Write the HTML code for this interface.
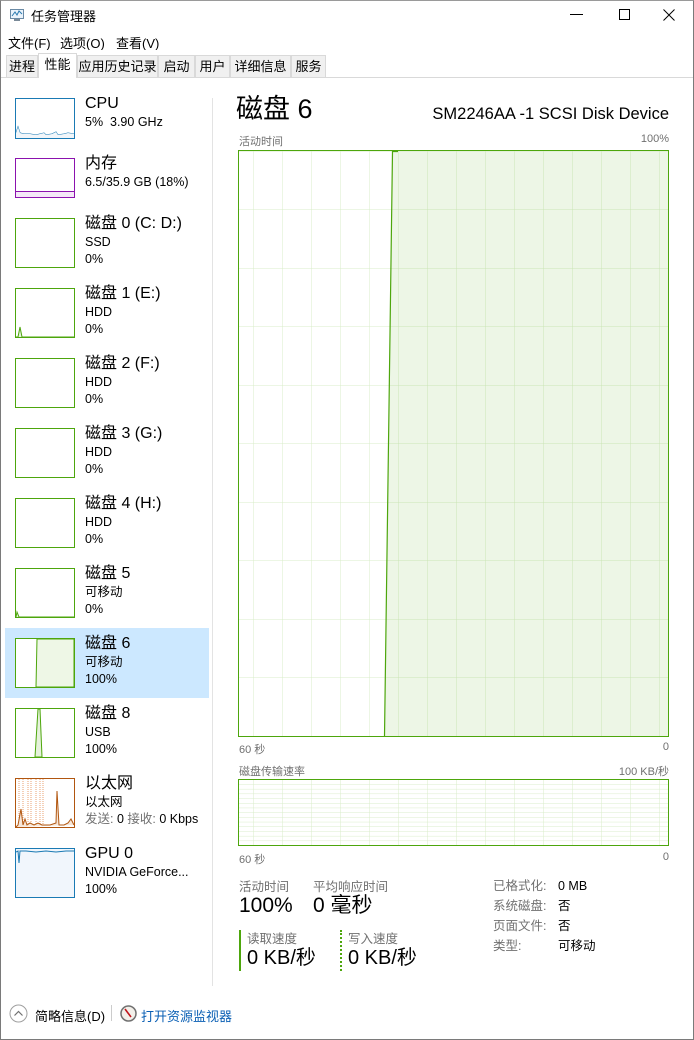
<!DOCTYPE html>
<html><head><meta charset="utf-8"><style>
*{margin:0;padding:0;box-sizing:border-box}
body{width:694px;height:1040px;overflow:hidden;background:#fff;font-family:"Liberation Sans","Noto Sans CJK SC",sans-serif;color:#000;position:relative}
.a{position:absolute;white-space:nowrap}
.win{position:absolute;left:0;top:0;width:694px;height:1040px;border:1px solid #7a7a7a;border-top:1px solid #9a9a9a}
.tab{position:absolute;top:55px;height:22px;background:#f0f0f0;border:1px solid #d9d9d9;border-bottom:none;font-size:13px;line-height:21px;text-align:center}
.th{position:absolute;left:15px;width:60px;border:1px solid #4da60c;background:#fff;overflow:hidden}
.tx{position:absolute;left:85px}
.tx .t{font-size:16px;line-height:20px}
.tx .s{font-size:12.5px;line-height:17px}
.g{color:#707070}
</style></head><body>
<div class="win"></div>
<!-- title bar -->
<svg class="a" style="left:9px;top:8px" width="16" height="15" viewBox="0 0 16 15"><rect x="1.5" y="1.5" width="13" height="9" fill="#eaf3fb" stroke="#6a8aa5"/><polyline points="3,8 6,4 8,7 10,3 13,6" fill="none" stroke="#2a7ab0" stroke-width="1"/><rect x="5" y="11" width="6" height="2" fill="#7a8a98"/></svg>
<div class="a" style="left:31px;top:6px;font-size:13px">任务管理器</div>
<div class="a" style="left:570px;top:14px;width:13px;height:1px;background:#000"></div>
<div class="a" style="left:619px;top:9px;width:11px;height:11px;border:1px solid #000"></div>
<svg class="a" style="left:663px;top:9px" width="12" height="12"><path d="M0.5 0.5L11.5 11.5M11.5 0.5L0.5 11.5" stroke="#000" stroke-width="1"/></svg>
<!-- menu -->
<div class="a" style="left:8px;top:33px;font-size:13px">文件(F)</div>
<div class="a" style="left:60px;top:33px;font-size:13px">选项(O)</div>
<div class="a" style="left:116px;top:33px;font-size:13px">查看(V)</div>
<div class="a" style="left:1px;top:50px;width:692px;height:27px;background:#fff"></div>
<div class="a" style="left:1px;top:77px;width:692px;height:1px;background:#d9d9d9"></div>
<div class="tab" style="left:6px;width:32px">进程</div>
<div class="tab" style="left:38px;width:39px;top:53px;height:25px;background:#fff;line-height:22px">性能</div>
<div class="tab" style="left:77px;width:81px">应用历史记录</div>
<div class="tab" style="left:158px;width:37px">启动</div>
<div class="tab" style="left:195px;width:35px">用户</div>
<div class="tab" style="left:230px;width:61px">详细信息</div>
<div class="tab" style="left:291px;width:35px">服务</div>
<!-- divider -->
<div class="a" style="left:212px;top:98px;width:1px;height:888px;background:#e3e3e3"></div>
<!-- selected -->
<div class="a" style="left:5px;top:628px;width:204px;height:70px;background:#cce8ff"></div>

<!-- CPU -->
<div class="th" style="top:98px;height:41px;border-color:#1a7ab4"><svg width="58" height="39"><polyline points="0,34 2,28 4,34 8,35 14,35 20,36 24,35 28,34 30,36 36,35 40,33 42,36 48,35 52,34 58,35" fill="none" stroke="#1a7ab4" stroke-width="1"/><polygon points="0,34 2,28 4,34 8,35 14,35 20,36 24,35 28,34 30,36 36,35 40,33 42,36 48,35 52,34 58,35 58,39 0,39" fill="#f1f6fa"/></svg></div>
<div class="tx" style="top:94px"><div class="t">CPU</div><div class="s">5%&nbsp; 3.90 GHz</div></div>
<!-- Memory -->
<div class="th" style="top:158px;height:40px;border-color:#8b12ae"><div style="position:absolute;left:0;right:0;bottom:0;height:6px;background:#f4e8f7;border-top:1px solid #8b12ae"></div></div>
<div class="tx" style="top:154px"><div class="t">内存</div><div class="s">6.5/35.9 GB (18%)</div></div>

<div class="th" style="top:218px;height:50px"></div>
<div class="tx" style="top:214px"><div class="t">磁盘 0 (C: D:)</div><div class="s">SSD</div><div class="s">0%</div></div>

<div class="th" style="top:288px;height:50px"><svg width="58" height="48"><polyline points="0,48 2,48 4,38 6,48 58,48" fill="#e6f2dc" stroke="#4da60c"/></svg></div>
<div class="tx" style="top:284px"><div class="t">磁盘 1 (E:)</div><div class="s">HDD</div><div class="s">0%</div></div>

<div class="th" style="top:358px;height:50px"></div>
<div class="tx" style="top:354px"><div class="t">磁盘 2 (F:)</div><div class="s">HDD</div><div class="s">0%</div></div>

<div class="th" style="top:428px;height:50px"></div>
<div class="tx" style="top:424px"><div class="t">磁盘 3 (G:)</div><div class="s">HDD</div><div class="s">0%</div></div>

<div class="th" style="top:498px;height:50px"></div>
<div class="tx" style="top:494px"><div class="t">磁盘 4 (H:)</div><div class="s">HDD</div><div class="s">0%</div></div>

<div class="th" style="top:568px;height:50px"><svg width="58" height="48"><polyline points="0,48 1,43 3,48 8,48 58,48" fill="#e6f2dc" stroke="#4da60c"/></svg></div>
<div class="tx" style="top:564px"><div class="t">磁盘 5</div><div class="s">可移动</div><div class="s">0%</div></div>

<div class="th" style="top:638px;height:50px"><svg width="58" height="48"><polygon points="20,48 21,0 58,0 58,48" fill="#eef7e6" stroke="#4da60c"/></svg></div>
<div class="tx" style="top:634px"><div class="t">磁盘 6</div><div class="s">可移动</div><div class="s">100%</div></div>

<div class="th" style="top:708px;height:50px"><svg width="58" height="48"><polygon points="19,48 22,0 24,0 26,48" fill="#e6f2dc" stroke="#4da60c"/></svg></div>
<div class="tx" style="top:704px"><div class="t">磁盘 8</div><div class="s">USB</div><div class="s">100%</div></div>

<div class="th" style="top:778px;height:50px;border-color:#b1560f"><svg width="58" height="48"><g stroke="#e8a070" stroke-width="1" stroke-dasharray="1,1"><path d="M3 0V48M7 0V48M12 0V48M15 0V48M20 0V48M24 0V48M27 0V48"/></g><polyline points="0,48 2,46 5,30 7,46 9,40 11,46 14,44 18,46 22,44 26,46 34,46 40,44 41,12 43,46 48,46 52,44 55,40 58,46" fill="#f7e6d8" stroke="#b1560f"/></svg></div>
<div class="tx" style="top:774px"><div class="t">以太网</div><div class="s">以太网</div><div class="s"><span class="g">发送:</span> 0 <span class="g">接收:</span> 0 Kbps</div></div>

<div class="th" style="top:848px;height:50px;border-color:#1a7ab4;background:#f1f6fc"><svg width="58" height="48"><polyline points="0,3 2,2 3,14 4,2 10,2 20,3 30,2 40,3 50,2 58,2" fill="none" stroke="#1a7ab4"/></svg></div>
<div class="tx" style="top:844px"><div class="t">GPU 0</div><div class="s">NVIDIA GeForce...</div><div class="s">100%</div></div>

<!-- right panel -->
<div class="a" style="left:236px;top:91px;font-size:27px;line-height:36px">磁盘 6</div>
<div class="a" style="right:25px;top:104px;font-size:16.5px;line-height:20px">SM2246AA -1 SCSI Disk Device</div>
<div class="a g" style="left:239px;top:133px;font-size:11px">活动时间</div>
<div class="a g" style="right:25px;top:133px;font-size:11px">100%</div>
<svg class="a" style="left:238px;top:150px" width="432" height="588">
<defs><pattern id="p1" x="15.5" y="59.5" width="29" height="58.5" patternUnits="userSpaceOnUse"><path d="M0 0V58.5M0 0H29" stroke="#d9ecc9" stroke-width="1" fill="none"/></pattern>
<pattern id="p2" x="15.5" y="0.5" width="29" height="4.7" patternUnits="userSpaceOnUse"><path d="M0 0V4.7M0 0H29" stroke="#d9ecc9" stroke-width="1" fill="none"/></pattern></defs>
<rect x="1" y="1" width="430" height="586" fill="url(#p1)"/>
<polygon points="146.5,586 154.5,1.5 430.5,1.5 430.5,586" fill="#4da60c" fill-opacity="0.1"/>
<polyline points="146.5,586 154.5,1.5 160,1.5" fill="none" stroke="#4da60c" stroke-width="1.2"/>
<rect x="0.5" y="0.5" width="430" height="586" fill="none" stroke="#4da60c"/>
</svg>
<div class="a g" style="left:239px;top:741px;font-size:11px">60 秒</div>
<div class="a g" style="right:25px;top:741px;font-size:11px">0</div>
<div class="a g" style="left:239px;top:763px;font-size:11px">磁盘传输速率</div>
<div class="a g" style="right:25px;top:763px;font-size:11px">100 KB/秒</div>
<svg class="a" style="left:238px;top:779px" width="432" height="68">
<defs><pattern id="p3" x="15.5" y="0.5" width="29" height="4.7" patternUnits="userSpaceOnUse"><path d="M0 0V4.7M0 0H29" stroke="#d9ecc9" stroke-width="1" fill="none"/></pattern></defs>
<rect x="1" y="1" width="430" height="66" fill="url(#p3)"/>
<rect x="0.5" y="0.5" width="430" height="66" fill="none" stroke="#4da60c"/>
</svg>
<div class="a g" style="left:239px;top:851px;font-size:11px">60 秒</div>
<div class="a g" style="right:25px;top:851px;font-size:11px">0</div>

<div class="a g" style="left:239px;top:876px;font-size:12.5px">活动时间</div>
<div class="a g" style="left:313px;top:876px;font-size:12.5px">平均响应时间</div>
<div class="a" style="left:239px;top:893px;font-size:21px;line-height:26px">100%</div>
<div class="a" style="left:313px;top:893px;font-size:21px;line-height:26px">0 毫秒</div>
<div class="a" style="left:239px;top:930px;width:2px;height:41px;background:#4da60c"></div>
<div class="a" style="left:340px;top:930px;width:2px;height:41px;border-left:2px dotted #4da60c"></div>
<div class="a g" style="left:247px;top:928px;font-size:12.5px">读取速度</div>
<div class="a g" style="left:348px;top:928px;font-size:12.5px">写入速度</div>
<div class="a" style="left:247px;top:945px;font-size:20px;line-height:26px">0 KB/秒</div>
<div class="a" style="left:348px;top:945px;font-size:20px;line-height:26px">0 KB/秒</div>

<div class="a g" style="left:493px;top:876px;font-size:12.5px;line-height:20px">已格式化:<br>系统磁盘:<br>页面文件:<br>类型:</div>
<div class="a" style="left:558px;top:876px;font-size:12.5px;line-height:20px">0 MB<br>否<br>否<br>可移动</div>

<!-- bottom -->
<svg class="a" style="left:9px;top:1004px" width="19" height="19"><circle cx="9.5" cy="9.5" r="8.5" fill="#fff" stroke="#a0a0a0"/><path d="M5.5 11.5L9.5 7.5L13.5 11.5" fill="none" stroke="#707070" stroke-width="1.2"/></svg>
<div class="a" style="left:35px;top:1006px;font-size:13px">简略信息(D)</div>
<div class="a" style="left:111px;top:1005px;width:1px;height:16px;background:#ccc"></div>
<svg class="a" style="left:120px;top:1005px" width="17" height="17"><circle cx="8.5" cy="8.5" r="7.5" fill="#f3f0ea" stroke="#707070" stroke-width="1.5"/><path d="M5 4L11 12" stroke="#c0151c" stroke-width="1.6"/></svg>
<div class="a" style="left:141px;top:1006px;font-size:13px;color:#0a5fb4">打开资源监视器</div>
</body></html>
